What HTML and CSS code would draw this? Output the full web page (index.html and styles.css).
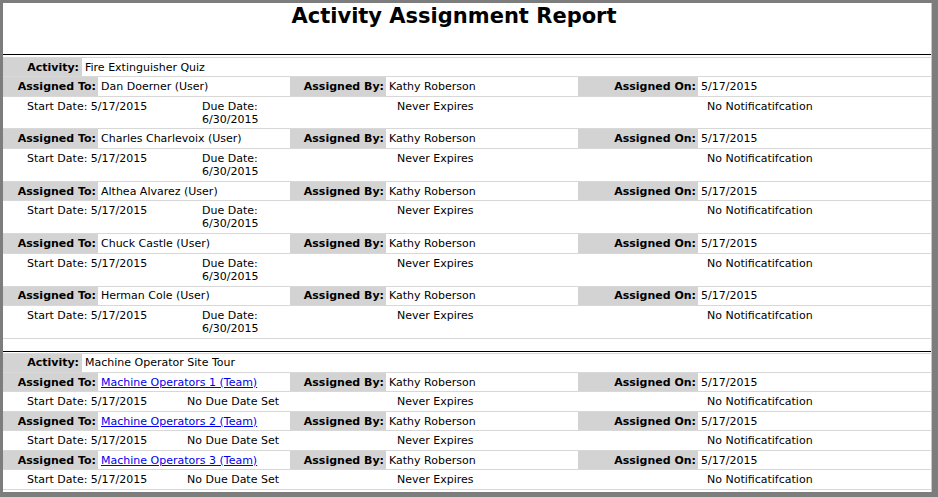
FILE: index.html
```html
<!DOCTYPE html>
<html>
<head>
<meta charset="utf-8">
<title>Activity Assignment Report</title>
<link rel="stylesheet" href="styles.css">
</head>
<body>
<div class="page">
  <h1 class="title">Activity Assignment Report</h1>

  <div class="section">
    <div class="row act-row"><span class="lbl">Activity:</span><span class="val">Fire Extinguisher Quiz</span></div>

    <div class="row assign-row">
      <span class="lbl">Assigned To:</span><span class="val">Dan Doerner (User)</span>
      <span class="lbl">Assigned By:</span><span class="val">Kathy Roberson</span>
      <span class="lbl">Assigned On:</span><span class="val">5/17/2015</span>
    </div>
    <div class="row date-row date-two">
      <span class="start">Start Date: 5/17/2015</span>
      <span class="due due-set">Due Date:<br>6/30/2015</span>
      <span class="exp">Never Expires</span>
      <span class="notif">No Notificatifcation</span>
    </div>

    <div class="row assign-row">
      <span class="lbl">Assigned To:</span><span class="val">Charles Charlevoix (User)</span>
      <span class="lbl">Assigned By:</span><span class="val">Kathy Roberson</span>
      <span class="lbl">Assigned On:</span><span class="val">5/17/2015</span>
    </div>
    <div class="row date-row date-two">
      <span class="start">Start Date: 5/17/2015</span>
      <span class="due due-set">Due Date:<br>6/30/2015</span>
      <span class="exp">Never Expires</span>
      <span class="notif">No Notificatifcation</span>
    </div>

    <div class="row assign-row">
      <span class="lbl">Assigned To:</span><span class="val">Althea Alvarez (User)</span>
      <span class="lbl">Assigned By:</span><span class="val">Kathy Roberson</span>
      <span class="lbl">Assigned On:</span><span class="val">5/17/2015</span>
    </div>
    <div class="row date-row date-two">
      <span class="start">Start Date: 5/17/2015</span>
      <span class="due due-set">Due Date:<br>6/30/2015</span>
      <span class="exp">Never Expires</span>
      <span class="notif">No Notificatifcation</span>
    </div>

    <div class="row assign-row">
      <span class="lbl">Assigned To:</span><span class="val">Chuck Castle (User)</span>
      <span class="lbl">Assigned By:</span><span class="val">Kathy Roberson</span>
      <span class="lbl">Assigned On:</span><span class="val">5/17/2015</span>
    </div>
    <div class="row date-row date-two">
      <span class="start">Start Date: 5/17/2015</span>
      <span class="due due-set">Due Date:<br>6/30/2015</span>
      <span class="exp">Never Expires</span>
      <span class="notif">No Notificatifcation</span>
    </div>

    <div class="row assign-row">
      <span class="lbl">Assigned To:</span><span class="val">Herman Cole (User)</span>
      <span class="lbl">Assigned By:</span><span class="val">Kathy Roberson</span>
      <span class="lbl">Assigned On:</span><span class="val">5/17/2015</span>
    </div>
    <div class="row date-row date-two">
      <span class="start">Start Date: 5/17/2015</span>
      <span class="due due-set">Due Date:<br>6/30/2015</span>
      <span class="exp">Never Expires</span>
      <span class="notif">No Notificatifcation</span>
    </div>

    <div class="row spacer"></div>
  </div>

  <div class="section">
    <div class="row act-row"><span class="lbl">Activity:</span><span class="val">Machine Operator Site Tour</span></div>

    <div class="row assign-row">
      <span class="lbl">Assigned To:</span><span class="val"><a href="#">Machine Operators 1 (Team)</a></span>
      <span class="lbl">Assigned By:</span><span class="val">Kathy Roberson</span>
      <span class="lbl">Assigned On:</span><span class="val">5/17/2015</span>
    </div>
    <div class="row date-row">
      <span class="start">Start Date: 5/17/2015</span>
      <span class="due">No Due Date Set</span>
      <span class="exp">Never Expires</span>
      <span class="notif">No Notificatifcation</span>
    </div>

    <div class="row assign-row">
      <span class="lbl">Assigned To:</span><span class="val"><a href="#">Machine Operators 2 (Team)</a></span>
      <span class="lbl">Assigned By:</span><span class="val">Kathy Roberson</span>
      <span class="lbl">Assigned On:</span><span class="val">5/17/2015</span>
    </div>
    <div class="row date-row">
      <span class="start">Start Date: 5/17/2015</span>
      <span class="due">No Due Date Set</span>
      <span class="exp">Never Expires</span>
      <span class="notif">No Notificatifcation</span>
    </div>

    <div class="row assign-row">
      <span class="lbl">Assigned To:</span><span class="val"><a href="#">Machine Operators 3 (Team)</a></span>
      <span class="lbl">Assigned By:</span><span class="val">Kathy Roberson</span>
      <span class="lbl">Assigned On:</span><span class="val">5/17/2015</span>
    </div>
    <div class="row date-row">
      <span class="start">Start Date: 5/17/2015</span>
      <span class="due">No Due Date Set</span>
      <span class="exp">Never Expires</span>
      <span class="notif">No Notificatifcation</span>
    </div>
  </div>
</div>
</body>
</html>
```
FILE: styles.css
```css
* {
  box-sizing: border-box;
  margin: 0;
  padding: 0;
}

html,
body {
  width: 938px;
  height: 497px;
  overflow: hidden;
}

body {
  background: #7d7d7d;
  padding: 3px 0 0 3px;
  font-family: "DejaVu Sans", Verdana, sans-serif;
  font-size: 11px;
  line-height: 13px;
  color: #000;
}

.page {
  width: 929px;
  height: 489px;
  background: #fff;
  border-right: 1px solid #c8c8c8;
  overflow: hidden;
}

.title {
  height: 51px;
  padding: 1px 26px 0 0;
  text-align: center;
  font-size: 21px;
  line-height: 25px;
  font-weight: bold;
}

.section {
  border-top: 1px solid #000;
  padding-top: 2px;
}

.section + .section {
  padding-top: 1px;
}

.section:last-child {
  border-bottom: 1px solid #d8d8d8;
}

.row {
  display: grid;
  border-top: 1px solid #d8d8d8;
}

.lbl {
  display: flex;
  align-items: center;
  justify-content: flex-end;
  padding-right: 2px;
  background: #d3d3d3;
  font-weight: bold;
  white-space: nowrap;
}

.val {
  display: flex;
  align-items: center;
  padding-left: 3px;
  white-space: nowrap;
}

.val a {
  color: #0000ee;
  text-decoration: underline;
}

.act-row {
  grid-template-columns: 79px 1fr;
  height: 19px;
}

.act-row .lbl {
  padding-right: 3px;
}

.assign-row {
  grid-template-columns: 95px 192px 96px 192px 120px 1fr;
  height: 19.5px;
}

.date-row {
  grid-template-columns: 184px 210px 310px 1fr;
  align-items: center;
  height: 19.5px;
  white-space: nowrap;
}

.date-two {
  align-items: start;
  height: 32.9px;
  padding-top: 3px;
}

.start {
  padding-left: 24px;
}

.due-set {
  padding-left: 15px;
}

.spacer {
  height: 13px;
}
```
